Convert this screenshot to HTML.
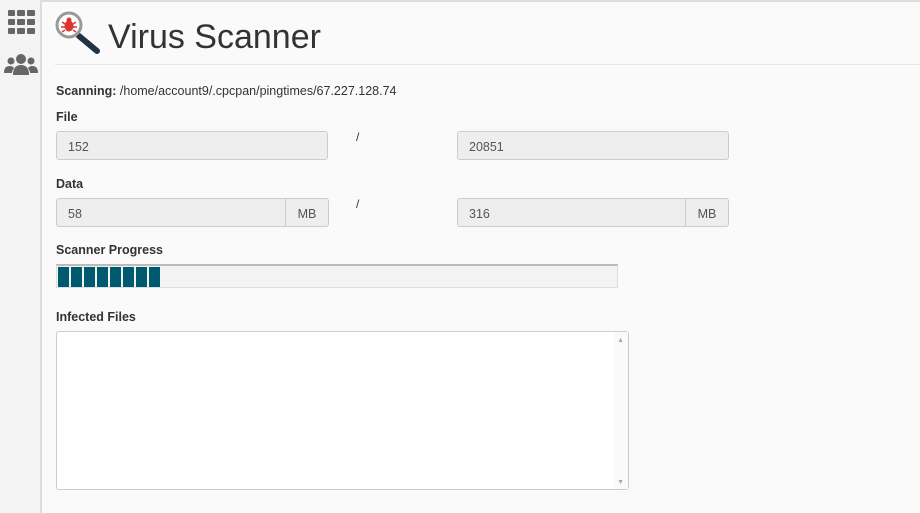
<!DOCTYPE html>
<html><head><style>
body{margin:0;width:920px;height:513px;background:#fafafa;font-family:"Liberation Sans",sans-serif;color:#333;position:relative;overflow:hidden}
.side{position:absolute;left:0;top:0;width:40px;height:513px;background:#f3f3f3;border-right:2px solid #ddd}
.top{position:absolute;left:0;top:0;width:920px;height:2px;background:#ddd}
.abs{position:absolute}
.lbl{position:absolute;left:56px;font-size:12.5px;font-weight:bold;color:#333}
.inp{position:absolute;height:29px;background:#eee;border:1px solid #ccc;border-radius:3px;box-sizing:border-box;font-size:12.5px;color:#555;padding:8px 11px}
.add{position:absolute;height:29px;border:1px solid #ccc;border-radius:0 3px 3px 0;background:#eee;box-sizing:border-box;font-size:12.5px;color:#555;padding:8px 0;text-align:center;width:44px}
.slash{position:absolute;left:356px;font-size:12px;color:#333}
</style></head><body>
<div class="top"></div>
<div class="side">
<svg class="abs" style="left:8px;top:10px" width="27" height="24" viewBox="0 0 27 24" fill="#666">
<rect x="0" y="0" width="7" height="6" rx="1"/><rect x="9" y="0" width="8" height="6" rx="1"/><rect x="19" y="0" width="8" height="6" rx="1"/>
<rect x="0" y="9" width="7" height="6" rx="1"/><rect x="9" y="9" width="8" height="6" rx="1"/><rect x="19" y="9" width="8" height="6" rx="1"/>
<rect x="0" y="18" width="7" height="6" rx="1"/><rect x="9" y="18" width="8" height="6" rx="1"/><rect x="19" y="18" width="8" height="6" rx="1"/></svg>
<svg class="abs" style="left:4px;top:53px" width="34" height="24" viewBox="0 0 34 24" fill="#666">
<circle cx="17" cy="6" r="5"/><path d="M9 22c0-7 3-10 8-10s8 3 8 10z"/>
<circle cx="7" cy="8" r="3.5"/><path d="M0 20c0-5 2-7 6-7 2 0 3 1 4 2-1 2-2 3-2 5z"/>
<circle cx="27" cy="8" r="3.5"/><path d="M34 20c0-5-2-7-6-7-2 0-3 1-4 2 1 2 2 3 2 5z"/></svg>
</div>
<svg class="abs" style="left:54px;top:11px" width="48" height="44" viewBox="0 0 48 44">
<line x1="25" y1="25" x2="43" y2="40" stroke="#234" stroke-width="6" stroke-linecap="round"/>
<circle cx="15" cy="14" r="12" fill="#fff" stroke="#999" stroke-width="3"/>
<ellipse cx="15" cy="15" rx="4.5" ry="5.5" fill="#d33"/><circle cx="15" cy="9" r="2.5" fill="#d33"/>
<path d="M8 11l3 2M22 11l-3 2M7 16h4M23 16h-4M8 21l3-2M22 21l-3-2" stroke="#d33" stroke-width="1.5"/></svg>
<div class="abs" style="left:108px;top:18px;font-size:34px;color:#333">Virus Scanner</div>
<div class="abs" style="left:55px;top:64px;width:865px;height:1px;background:#e5e5e5"></div>
<div class="abs" style="left:56px;top:84px;font-size:12.5px"><b>Scanning:</b> /home/account9/.cpcpan/pingtimes/67.227.128.74</div>
<div class="lbl" style="top:110px">File</div>
<div class="inp" style="left:56px;top:131px;width:272px">152</div>
<div class="slash" style="top:130px">/</div>
<div class="inp" style="left:457px;top:131px;width:272px">20851</div>
<div class="lbl" style="top:177px">Data</div>
<div class="inp" style="left:56px;top:198px;width:230px;border-radius:3px 0 0 3px">58</div>
<div class="add" style="left:285px;top:198px">MB</div>
<div class="slash" style="top:197px">/</div>
<div class="inp" style="left:457px;top:198px;width:229px;border-radius:3px 0 0 3px">316</div>
<div class="add" style="left:685px;top:198px">MB</div>
<div class="lbl" style="top:243px">Scanner Progress</div>
<div class="abs" style="left:56px;top:264px;width:562px;height:24px;box-sizing:border-box;border:1px solid #ddd;border-top:2px solid #bbb;background:#f3f3f3">
<div class="abs" style="left:1px;top:1px;height:20px;display:flex;gap:2px">
<div style="width:11px;background:#005a6e"></div><div style="width:11px;background:#005a6e"></div><div style="width:11px;background:#005a6e"></div><div style="width:11px;background:#005a6e"></div><div style="width:11px;background:#005a6e"></div><div style="width:11px;background:#005a6e"></div><div style="width:11px;background:#005a6e"></div><div style="width:11px;background:#005a6e"></div></div></div>
<div class="lbl" style="top:310px">Infected Files</div>
<div class="abs" style="left:56px;top:331px;width:573px;height:159px;box-sizing:border-box;border:1px solid #ccc;border-radius:3px;background:#fff">
<div class="abs" style="right:0;top:0;width:14px;height:157px;background:#fafafa"></div>
<div class="abs" style="right:4px;top:5px;font-size:7px;color:#aaa">▲</div>
<div class="abs" style="right:4px;bottom:3px;font-size:7px;color:#aaa">▼</div></div>
</body></html>
